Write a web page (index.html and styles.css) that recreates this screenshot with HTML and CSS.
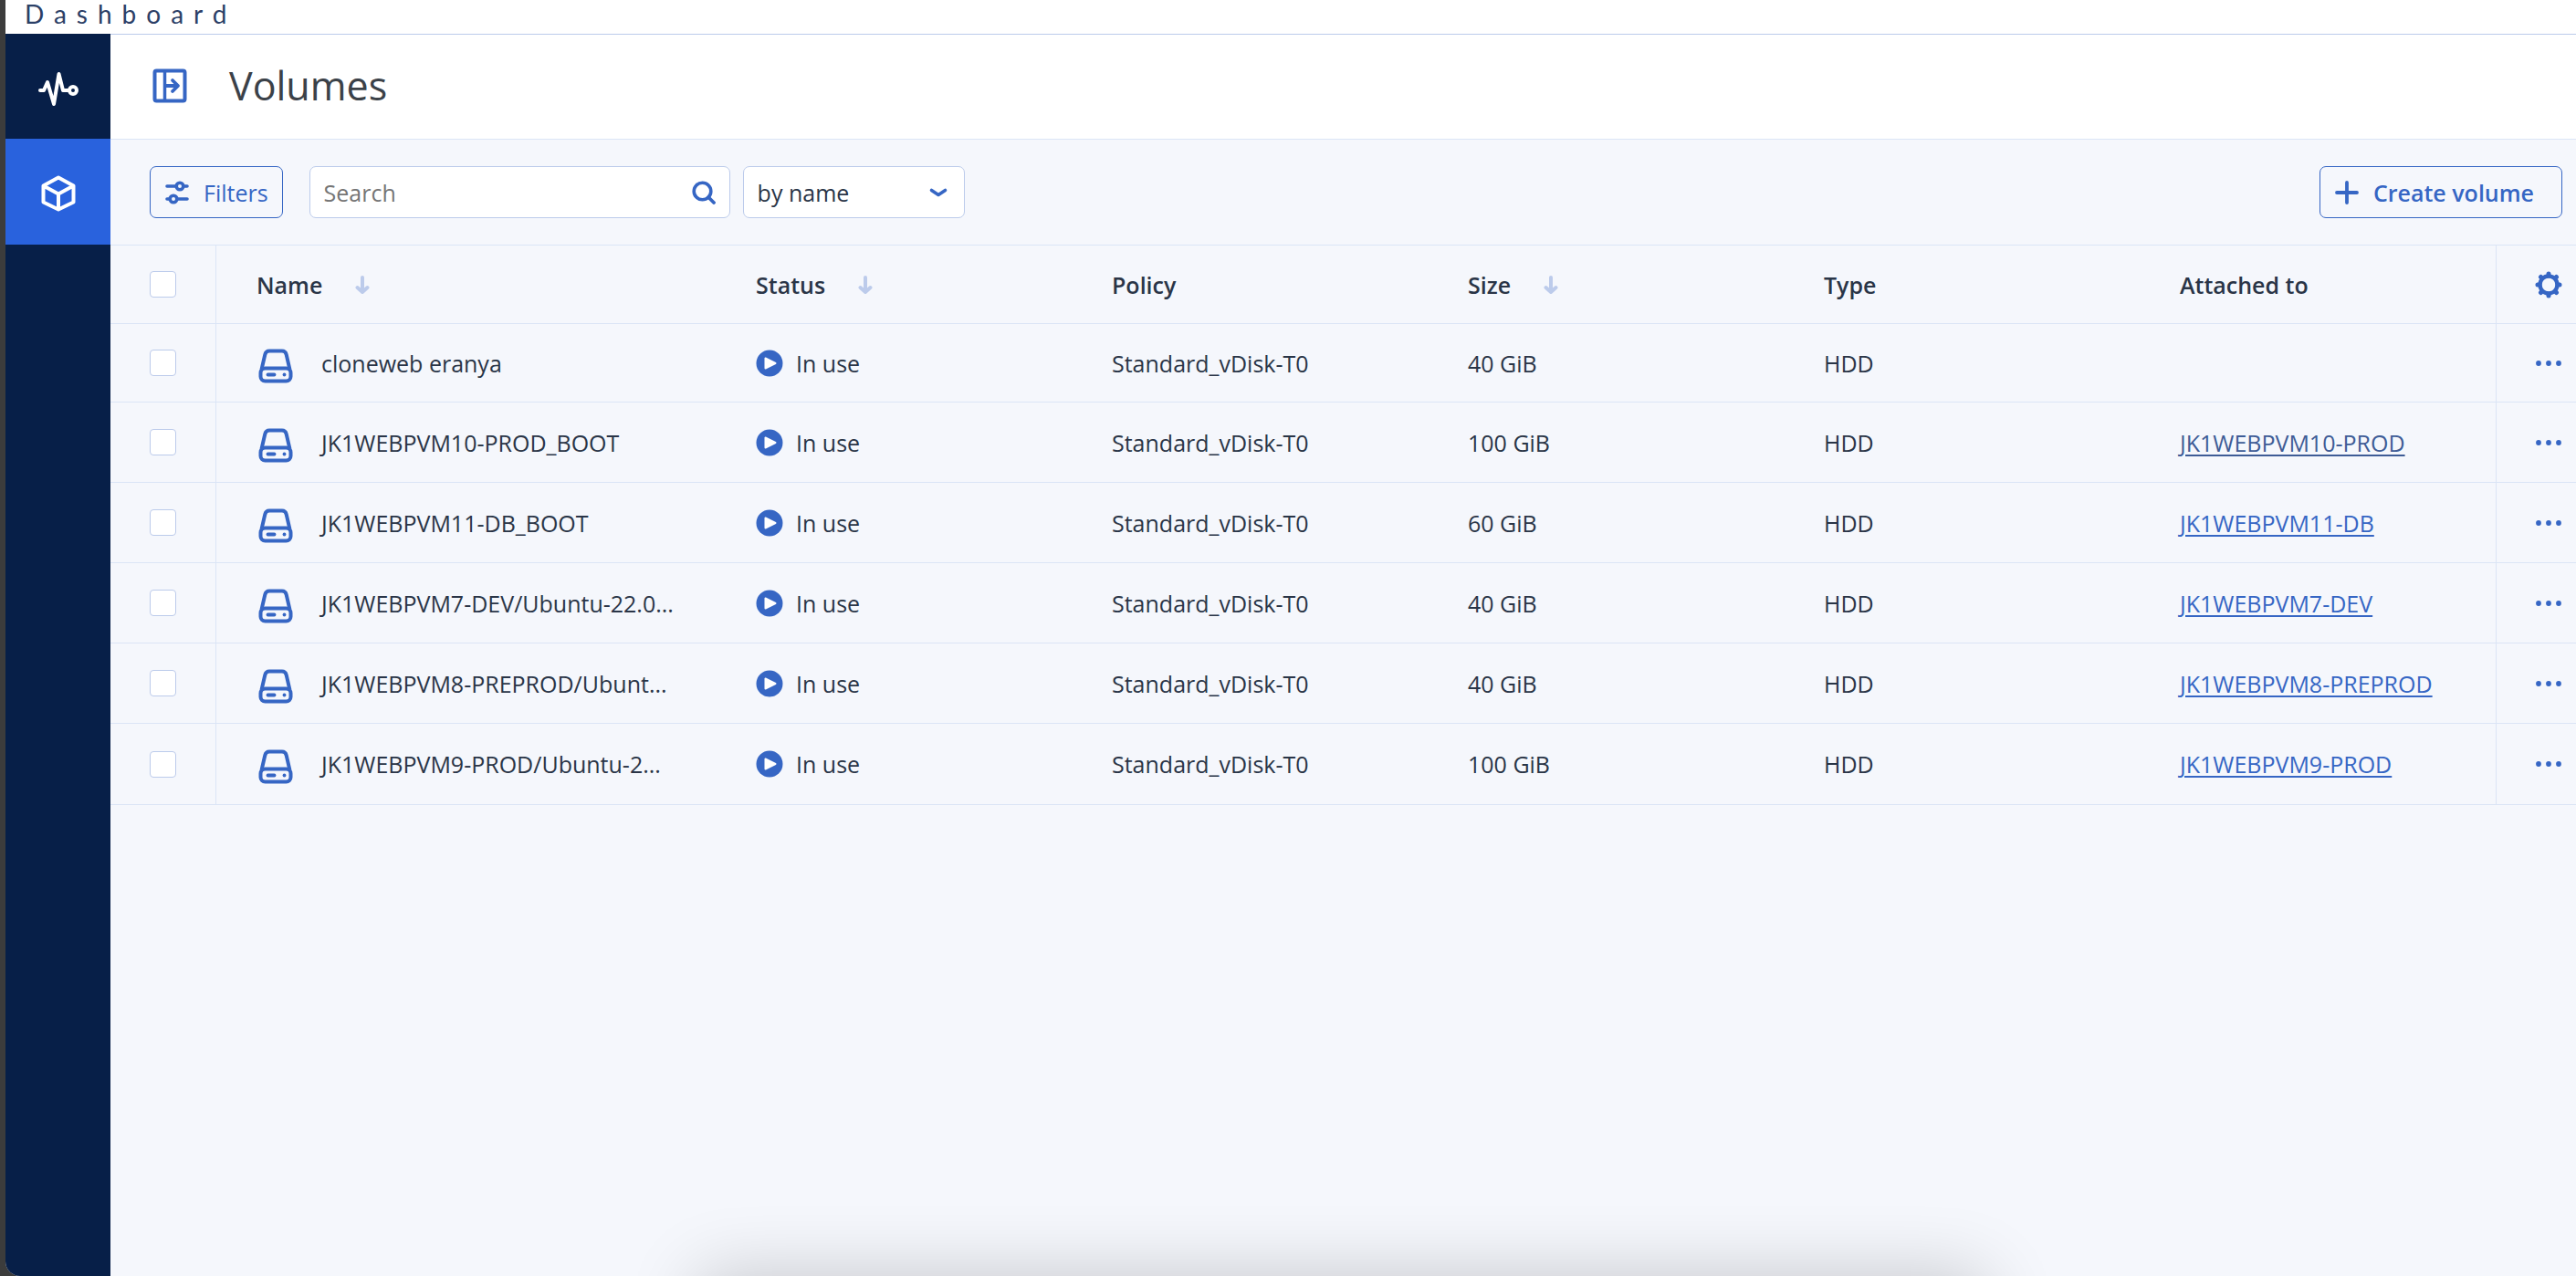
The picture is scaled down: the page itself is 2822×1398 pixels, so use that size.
FILE: index.html
```html
<!DOCTYPE html>
<html lang="en">
<head>
    <meta charset="UTF-8">
    <meta name="viewport" content="width=device-width, initial-scale=1.0">
    <title>Volumes</title>
    <link rel="stylesheet" href="styles.css">
</head>
<body>
    <svg class="sprite" aria-hidden="true">
        <symbol id="i-pulse" viewBox="0 0 44 38">
            <path d="M2 21h4l4-9 7 24L22.500 3l4.500 18h6" fill="none" stroke="currentColor" stroke-width="4" stroke-linecap="round" stroke-linejoin="round"/>
            <circle cx="38" cy="21" r="4" fill="none" stroke="currentColor" stroke-width="4"/>
        </symbol>
        <symbol id="i-cube" viewBox="0 0 38 40">
            <path d="M19 2.500l16.500 9v18L19 37.500l-16.500-8v-18zM2.500 11.500l16.500 9 16.500-9M19 20.500v17" fill="none" stroke="currentColor" stroke-width="4" stroke-linejoin="round"/>
        </symbol>
        <symbol id="i-panel" viewBox="0 0 38 38">
            <rect x="2.500" y="2.500" width="33" height="33" rx="2" fill="none" stroke="currentColor" stroke-width="4"/>
            <path d="M13.500 3v32" fill="none" stroke="currentColor" stroke-width="3.500"/>
            <path d="M14 19h13M22 13l6 6-6 6" fill="none" stroke="currentColor" stroke-width="3.800" stroke-linecap="round" stroke-linejoin="round"/>
        </symbol>
        <symbol id="i-filters" viewBox="0 0 26 26">
            <path d="M2 6h9M21 6h3M2 20h3M14 20h10" fill="none" stroke="currentColor" stroke-width="3.600" stroke-linecap="round"/>
            <circle cx="16" cy="6" r="3.800" fill="none" stroke="currentColor" stroke-width="3.600"/>
            <circle cx="9" cy="20" r="3.800" fill="none" stroke="currentColor" stroke-width="3.600"/>
        </symbol>
        <symbol id="i-search" viewBox="0 0 26 26">
            <circle cx="11.500" cy="11.500" r="9.300" fill="none" stroke="currentColor" stroke-width="3.600"/>
            <path d="M18 18l6 6" stroke="currentColor" stroke-width="3.800" stroke-linecap="round"/>
        </symbol>
        <symbol id="i-chevron" viewBox="0 0 20 12">
            <path d="M2.500 3.500L10 8.500 17.500 3.500" fill="none" stroke="currentColor" stroke-width="3.600" stroke-linecap="round" stroke-linejoin="round"/>
        </symbol>
        <symbol id="i-plus" viewBox="0 0 26 26">
            <path d="M13 2v22M2 13h22" stroke="currentColor" stroke-width="3.800" stroke-linecap="round"/>
        </symbol>
        <symbol id="i-arrow" viewBox="0 0 16 22">
            <path d="M8 3v16M2.500 14L8 19l5.500-5" fill="none" stroke="currentColor" stroke-width="4" stroke-linecap="round" stroke-linejoin="round"/>
        </symbol>
        <symbol id="i-gear" viewBox="0 0 30 30">
            <circle cx="15" cy="15" r="9.500" fill="none" stroke="currentColor" stroke-width="4.400"/>
            <path d="M15 3v2M15 25v2M3 15h2M25 15h2M6.500 6.500l1 1M22.500 22.500l1 1M6.500 23.500l1-1M22.500 7.500l1-1" stroke="currentColor" stroke-width="5" stroke-linecap="round"/>
        </symbol>
        <symbol id="i-disk" viewBox="0 0 38 38">
            <path d="M3.500 23L7.300 6.500Q8.300 2.500 12 2.500H26Q29.700 2.500 30.700 6.500L34.500 23" fill="none" stroke="currentColor" stroke-width="4"/>
            <rect x="2.500" y="21.500" width="33" height="14" rx="5" fill="none" stroke="currentColor" stroke-width="4"/>
            <path d="M10.500 28.500h7" stroke="currentColor" stroke-width="3.800" stroke-linecap="round"/>
            <circle cx="28.500" cy="28.500" r="1.900" fill="currentColor"/>
        </symbol>
        <symbol id="i-play" viewBox="0 0 30 30">
            <circle cx="15" cy="15" r="14.500" fill="currentColor"/>
            <path d="M10.500 9.500v11l11-5.500z" fill="#fff" stroke="#fff" stroke-width="2" stroke-linejoin="round"/>
        </symbol>
        <symbol id="i-dots" viewBox="0 0 30 8">
            <circle cx="4" cy="4" r="2.900" fill="currentColor"/>
            <circle cx="15" cy="4" r="2.900" fill="currentColor"/>
            <circle cx="26" cy="4" r="2.900" fill="currentColor"/>
        </symbol>
    </svg>

    <div class="app">
        <div class="topbar">Dashboard</div>
        <div class="layout">
            <nav class="sidebar">
                <a href="#" class="nav-item" aria-label="Monitoring"><svg class="icon-pulse"><use href="#i-pulse"/></svg></a>
                <a href="#" class="nav-item active" aria-label="Compute"><svg class="icon-cube"><use href="#i-cube"/></svg></a>
            </nav>
            <main class="content">
                <header class="page-header">
                    <button class="icon-btn" aria-label="Expand menu"><svg class="icon-lg"><use href="#i-panel"/></svg></button>
                    <h1>Volumes</h1>
                </header>

                <div class="toolbar">
                    <button class="btn btn-filters"><svg class="icon"><use href="#i-filters"/></svg>Filters</button>
                    <div class="search">
                        <input type="text" placeholder="Search" aria-label="Search">
                        <button class="icon-btn" aria-label="Run search"><svg class="icon"><use href="#i-search"/></svg></button>
                    </div>
                    <div class="select">
                        <select aria-label="Search by">
                            <option>by name</option>
                        </select>
                        <svg class="icon-chevron"><use href="#i-chevron"/></svg>
                    </div>
                    <button class="btn btn-create"><svg class="icon"><use href="#i-plus"/></svg>Create volume</button>
                </div>

                <table class="volumes">
                    <colgroup>
                        <col class="col-check">
                        <col class="col-name">
                        <col><col><col><col><col>
                        <col class="col-actions">
                    </colgroup>
                    <thead>
                        <tr>
                            <th class="check"><input type="checkbox" aria-label="Select all"></th>
                            <th><button class="sort">Name<svg class="icon-arrow"><use href="#i-arrow"/></svg></button></th>
                            <th><button class="sort">Status<svg class="icon-arrow"><use href="#i-arrow"/></svg></button></th>
                            <th>Policy</th>
                            <th><button class="sort">Size<svg class="icon-arrow"><use href="#i-arrow"/></svg></button></th>
                            <th>Type</th>
                            <th>Attached to</th>
                            <th class="actions"><button class="icon-btn" aria-label="Settings"><svg class="icon-md"><use href="#i-gear"/></svg></button></th>
                        </tr>
                    </thead>
                    <tbody>
                        <tr>
                            <td class="check"><input type="checkbox" aria-label="Select cloneweb eranya"></td>
                            <td><div class="name"><svg class="icon-lg"><use href="#i-disk"/></svg><span>cloneweb eranya</span></div></td>
                            <td><div class="status"><svg class="icon-md"><use href="#i-play"/></svg>In use</div></td>
                            <td>Standard_vDisk-T0</td>
                            <td>40 GiB</td>
                            <td>HDD</td>
                            <td></td>
                            <td class="actions"><button class="icon-btn" aria-label="Actions"><svg class="icon-dots"><use href="#i-dots"/></svg></button></td>
                        </tr>
                        <tr>
                            <td class="check"><input type="checkbox" aria-label="Select JK1WEBPVM10-PROD_BOOT"></td>
                            <td><div class="name"><svg class="icon-lg"><use href="#i-disk"/></svg><span>JK1WEBPVM10-PROD_BOOT</span></div></td>
                            <td><div class="status"><svg class="icon-md"><use href="#i-play"/></svg>In use</div></td>
                            <td>Standard_vDisk-T0</td>
                            <td>100 GiB</td>
                            <td>HDD</td>
                            <td><a href="#" class="visited">JK1WEBPVM10-PROD</a></td>
                            <td class="actions"><button class="icon-btn" aria-label="Actions"><svg class="icon-dots"><use href="#i-dots"/></svg></button></td>
                        </tr>
                        <tr>
                            <td class="check"><input type="checkbox" aria-label="Select JK1WEBPVM11-DB_BOOT"></td>
                            <td><div class="name"><svg class="icon-lg"><use href="#i-disk"/></svg><span>JK1WEBPVM11-DB_BOOT</span></div></td>
                            <td><div class="status"><svg class="icon-md"><use href="#i-play"/></svg>In use</div></td>
                            <td>Standard_vDisk-T0</td>
                            <td>60 GiB</td>
                            <td>HDD</td>
                            <td><a href="#">JK1WEBPVM11-DB</a></td>
                            <td class="actions"><button class="icon-btn" aria-label="Actions"><svg class="icon-dots"><use href="#i-dots"/></svg></button></td>
                        </tr>
                        <tr>
                            <td class="check"><input type="checkbox" aria-label="Select JK1WEBPVM7-DEV"></td>
                            <td><div class="name"><svg class="icon-lg"><use href="#i-disk"/></svg><span>JK1WEBPVM7-DEV/Ubuntu-22.0...</span></div></td>
                            <td><div class="status"><svg class="icon-md"><use href="#i-play"/></svg>In use</div></td>
                            <td>Standard_vDisk-T0</td>
                            <td>40 GiB</td>
                            <td>HDD</td>
                            <td><a href="#">JK1WEBPVM7-DEV</a></td>
                            <td class="actions"><button class="icon-btn" aria-label="Actions"><svg class="icon-dots"><use href="#i-dots"/></svg></button></td>
                        </tr>
                        <tr>
                            <td class="check"><input type="checkbox" aria-label="Select JK1WEBPVM8-PREPROD"></td>
                            <td><div class="name"><svg class="icon-lg"><use href="#i-disk"/></svg><span>JK1WEBPVM8-PREPROD/Ubunt...</span></div></td>
                            <td><div class="status"><svg class="icon-md"><use href="#i-play"/></svg>In use</div></td>
                            <td>Standard_vDisk-T0</td>
                            <td>40 GiB</td>
                            <td>HDD</td>
                            <td><a href="#">JK1WEBPVM8-PREPROD</a></td>
                            <td class="actions"><button class="icon-btn" aria-label="Actions"><svg class="icon-dots"><use href="#i-dots"/></svg></button></td>
                        </tr>
                        <tr>
                            <td class="check"><input type="checkbox" aria-label="Select JK1WEBPVM9-PROD"></td>
                            <td><div class="name"><svg class="icon-lg"><use href="#i-disk"/></svg><span>JK1WEBPVM9-PROD/Ubuntu-2...</span></div></td>
                            <td><div class="status"><svg class="icon-md"><use href="#i-play"/></svg>In use</div></td>
                            <td>Standard_vDisk-T0</td>
                            <td>100 GiB</td>
                            <td>HDD</td>
                            <td><a href="#">JK1WEBPVM9-PROD</a></td>
                            <td class="actions"><button class="icon-btn" aria-label="Actions"><svg class="icon-dots"><use href="#i-dots"/></svg></button></td>
                        </tr>
                    </tbody>
                </table>
            </main>
        </div>
        <div class="dock-shadow"></div>
    </div>
</body>
</html>
```
FILE: styles.css
```css
* {
    box-sizing: border-box;
    margin: 0;
    padding: 0;
}
body {
    font-family: 'Open Sans', sans-serif;
    font-size: 25px;
    line-height: 36px;
    color: #2a3547;
    background-color: #3c3c3c;
}
button, input, select {
    font: inherit;
    color: inherit;
}
button {
    background: none;
    border: none;
    cursor: pointer;
}
svg {
    display: block;
    flex-shrink: 0;
}
.sprite {
    position: absolute;
    width: 0;
    height: 0;
}
.app {
    position: relative;
    display: flex;
    flex-direction: column;
    min-height: 100vh;
    margin-left: 6px;
    border-bottom-left-radius: 16px;
    overflow: hidden;
    background-color: #f5f7fc;
}
.topbar {
    height: 37px;
    padding-left: 21px;
    background-color: #fff;
    color: #2c4067;
    font-family: Lato, sans-serif;
    font-size: 28px;
    line-height: 30px;
    letter-spacing: 11px;
}
.layout {
    display: flex;
    flex: 1;
}
.sidebar {
    width: 115px;
    flex-shrink: 0;
    background-color: #071f48;
}
.nav-item {
    display: flex;
    align-items: center;
    justify-content: center;
    height: 115px;
    padding-top: 4px;
    color: #fff;
}
.nav-item.active {
    height: 116px;
    background-color: #2962dd;
}
.content {
    flex: 1;
    min-width: 0;
}
.page-header {
    display: flex;
    align-items: center;
    gap: 46px;
    height: 116px;
    padding: 0 46px 2px;
    background-color: #fff;
    border-top: 1px solid #bccbeb;
    border-bottom: 1px solid #dbe5f6;
}
h1 {
    color: #3b4148;
    font-size: 43px;
    font-weight: 400;
    line-height: 60px;
}
.toolbar {
    display: flex;
    align-items: center;
    height: 115px;
    padding: 0 15px 0 43px;
}
.icon-btn {
    display: block;
    color: #3666c4;
}
.icon {
    width: 26px;
    height: 26px;
}
.icon-md {
    width: 30px;
    height: 30px;
}
.icon-lg {
    width: 38px;
    height: 38px;
}
.icon-pulse {
    width: 44px;
    height: 38px;
}
.icon-cube {
    width: 38px;
    height: 40px;
}
.icon-arrow {
    width: 16px;
    height: 22px;
    color: #bccbeb;
}
.icon-dots {
    width: 30px;
    height: 8px;
}
.btn {
    display: flex;
    align-items: center;
    gap: 16px;
    height: 57px;
    padding: 0 15px 0 16px;
    border: 1px solid #3666c4;
    border-radius: 7px;
    color: #3666c4;
}
.btn-create {
    margin-left: auto;
    padding-right: 30px;
    font-weight: 600;
}
.search {
    display: flex;
    align-items: center;
    width: 461px;
    height: 57px;
    margin: 0 14px 0 29px;
    padding: 0 15px;
    background-color: #fff;
    border: 1px solid #bccbeb;
    border-radius: 7px;
}
.search input {
    flex: 1;
    min-width: 0;
    border: none;
    outline: none;
    background: none;
}
.search input::placeholder {
    color: #757575;
}
.select {
    position: relative;
    width: 243px;
}
.select select {
    width: 100%;
    height: 57px;
    padding: 0 15px;
    appearance: none;
    background-color: #fff;
    border: 1px solid #bccbeb;
    border-radius: 7px;
}
.icon-chevron {
    position: absolute;
    top: 23px;
    right: 19px;
    width: 20px;
    height: 12px;
    color: #3666c4;
    pointer-events: none;
}
.volumes {
    width: 100%;
    table-layout: fixed;
    border-collapse: separate;
    border-spacing: 0;
    border-top: 1px solid #dbe5f6;
}
.col-check {
    width: 116px;
}
.col-name {
    width: 547px;
}
.col-actions {
    width: 88px;
}
.volumes th,
.volumes td {
    height: 88px;
    padding-left: 44px;
    border-bottom: 1px solid #dbe5f6;
    text-align: left;
    vertical-align: middle;
    white-space: nowrap;
}
.volumes th,
.volumes tbody tr:first-child td {
    height: 86px;
}
.volumes tbody tr:last-child td {
    height: 89px;
}
.volumes th {
    font-weight: 600;
}
.volumes .check {
    padding-left: 43px;
    border-right: 1px solid #dbe5f6;
}
.volumes .actions {
    padding-left: 42px;
    border-left: 1px solid #dbe5f6;
}
input[type="checkbox"] {
    display: block;
    width: 29px;
    height: 29px;
    appearance: none;
    background-color: #fff;
    border: 1px solid #bccbeb;
    border-radius: 4px;
}
.sort {
    display: flex;
    align-items: center;
    gap: 36px;
}
.name {
    display: flex;
    align-items: center;
    gap: 31px;
    padding-left: 2px;
}
.name svg {
    margin-top: 6px;
    color: #3666c4;
}
.status {
    display: flex;
    align-items: center;
    gap: 14px;
}
.status svg {
    color: #3666c4;
}
.volumes a {
    color: #3666c4;
    text-decoration-thickness: 2px;
    text-underline-offset: 3px;
}
.volumes a.visited {
    color: #3e5c96;
}
/* soft shadow rising from below the window edge */
.dock-shadow {
    position: absolute;
    top: 100%;
    left: 27%;
    right: 23%;
    height: 100px;
    box-shadow: 0 0 80px rgba(0, 0, 0, 0.2);
}
```
